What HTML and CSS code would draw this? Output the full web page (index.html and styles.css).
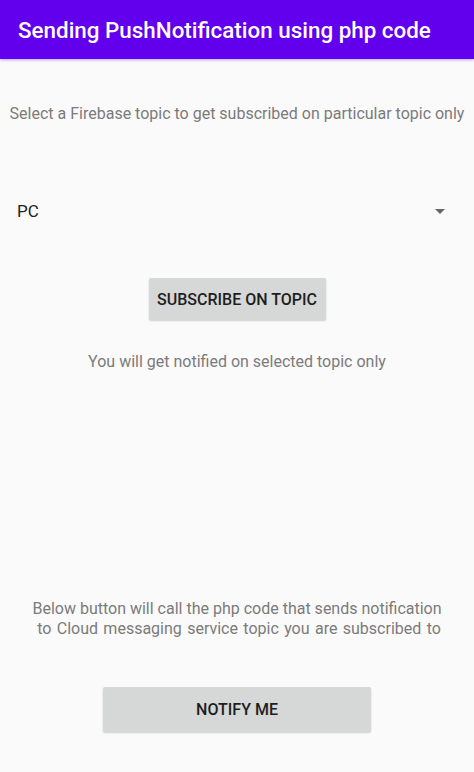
FILE: index.html
```html
<!DOCTYPE html>
<html>
<head>
<meta charset="utf-8">
<link rel="stylesheet" href="styles.css">
</head>
<body>
<header class="appbar">Sending PushNotification using php code</header>
<main class="content">
  <p class="hint hint-top">Select a Firebase topic to get subscribed on particular topic only</p>
  <div class="spinner">
    <span class="spinner-value">PC</span>
    <svg class="spinner-arrow" width="10" height="5" viewBox="0 0 10 5"><path d="M0 0h10L5 5z" fill="#666"/></svg>
  </div>
  <button class="btn btn-subscribe">SUBSCRIBE ON TOPIC</button>
  <p class="hint hint-mid">You will get notified on selected topic only</p>
  <p class="hint hint-bottom">Below button will call the php code that sends notification<br><span class="hint-wide">to Cloud messaging service topic you are subscribed to</span></p>
  <button class="btn btn-notify">NOTIFY ME</button>
</main>
</body>
</html>
```
FILE: styles.css
```css
html, body {
  margin: 0;
  padding: 0;
  background: #fafafa;
  font-family: Roboto, "Liberation Sans", sans-serif;
}
body {
  width: 474px;
  height: 772px;
  overflow: hidden;
}
.appbar {
  height: 59px;
  background: #6200ee;
  color: #ffffff;
  font-size: 22.4px;
  font-weight: 500;
  display: flex;
  align-items: center;
  padding-left: 18px;
  box-shadow: 0 1px 3px rgba(98, 0, 238, 0.35);
  position: relative;
}
.content {
  display: flex;
  flex-direction: column;
  align-items: center;
}
.hint {
  margin: 0;
  color: #7b7b7b;
  font-size: 16px;
  line-height: 20px;
  text-align: center;
}
.hint-wide {
  word-spacing: 1.4px;
  padding-left: 4px;
}
.hint-top {
  margin-top: 45px;
}
.spinner {
  align-self: stretch;
  display: flex;
  align-items: center;
  justify-content: space-between;
  height: 40px;
  margin-top: 67px;
  padding: 0 29px 0 17px;
}
.spinner-value {
  font-size: 17px;
  color: #222;
}
.btn {
  border: none;
  background: #d6d7d7;
  color: #1e1e1e;
  font-family: Roboto, "Liberation Sans", sans-serif;
  font-weight: 500;
  font-size: 16px;
  border-radius: 2px;
  box-shadow: 0 1px 2px rgba(0,0,0,0.18);
  padding: 0;
}
.btn-subscribe {
  margin-top: 47px;
  width: 177px;
  height: 42px;
}
.hint-mid {
  margin-top: 32px;
}
.hint-bottom {
  margin-top: 227px;
}
.btn-notify {
  margin-top: 48px;
  width: 268px;
  height: 45px;
}
```
